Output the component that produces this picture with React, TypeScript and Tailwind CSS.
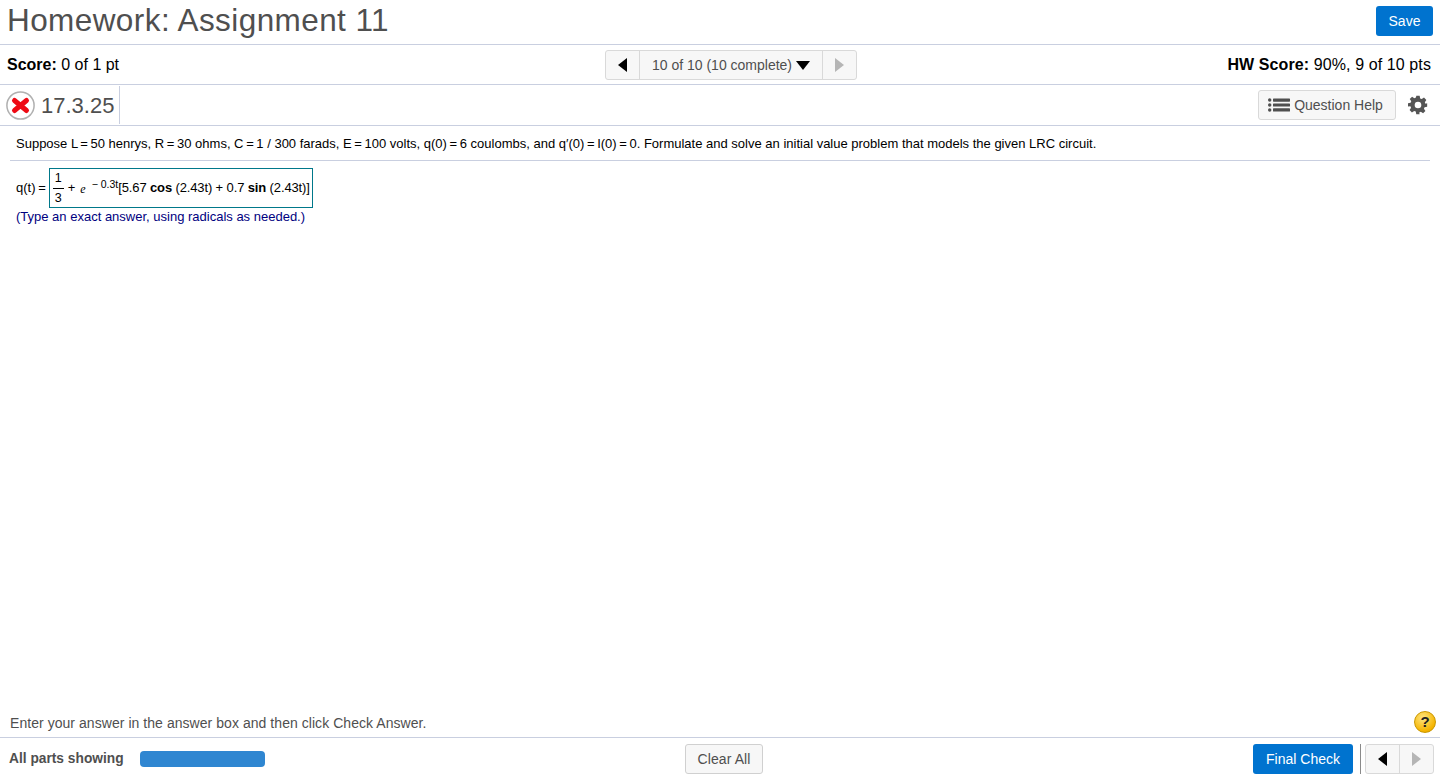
const ff = "font-['Helvetica','Liberation_Sans','Arial',sans-serif]";

function Left({ c = '#000' }: { c?: string }) {
  return <svg width="9" height="14" viewBox="0 0 9 14"><path d="M9 0v14L0 7z" fill={c} /></svg>;
}
function Right({ c = '#b5b5b5' }: { c?: string }) {
  return <svg width="9" height="14" viewBox="0 0 9 14"><path d="M0 0v14l9-7z" fill={c} /></svg>;
}
function Eq() {
  return <span className="mx-[-1px]">=</span>;
}

export default function App() {
  return (
    <div className={`${ff} h-[781px] w-[1440px] overflow-hidden bg-white flex flex-col text-black`}>
      <header className="h-[45px] shrink-0 border-b border-[#c9cfe0] flex items-center justify-between pl-[7px] pr-[7px] pb-[2px]">
        <h1 className="text-[31.5px] leading-[40px] text-[#4f4f4f] tracking-[0.42px] -mt-[3px]">Homework: Assignment 11</h1>
        <button className="h-[30px] w-[57px] rounded-[3px] bg-[#0073cf] text-white text-[14px] font-normal">Save</button>
      </header>

      <div className="h-[40px] shrink-0 border-b border-[#c9cfe0] grid grid-cols-[598px_252px_1fr] items-center px-[7px]">
        <div className="text-[16px] pt-[1px]"><b>Score:</b> 0 of 1 pt</div>
        <div className="h-[30px] flex rounded-[3px] border border-[#d9d9d9] bg-[#f7f7f7]">
          <div className="w-[34px] flex items-center justify-center border-r border-[#d9d9d9]"><Left /></div>
          <div className="flex-1 flex items-center justify-center gap-[4px] text-[14px] text-[#4f4f4f] border-r border-[#d9d9d9] pt-[1px]">
            10 of 10 (10 complete)
            <svg width="14" height="9" viewBox="0 0 14 9"><path d="M0 0h14L7 9z" fill="#000" /></svg>
          </div>
          <div className="w-[33px] flex items-center justify-center"><Right /></div>
        </div>
        <div className="text-[16px] text-right pr-[2px] pt-[1px] tracking-[0.1px]"><b>HW Score:</b> 90%, 9 of 10 pts</div>
      </div>

      <div className="h-[41px] shrink-0 border-b border-[#c9cfe0] flex items-center justify-between pl-[6px] pr-[12px]">
        <div className="flex items-center h-full pt-[1px] pb-[1px]">
          <svg width="29" height="29" viewBox="0 0 29 29" className="shrink-0">
            <circle cx="14.5" cy="14.5" r="13.6" fill="#fff" stroke="#b0b0b0" strokeWidth="1.5" />
            <path d="M8.5 9.5l12 10M20.5 9.5l-12 10" stroke="#ee0a14" strokeWidth="5" strokeLinecap="round" />
          </svg>
          <span className="ml-[6px] text-[22px] text-[#4f4f4f] pr-[5px]">17.3.25</span>
          <div className="h-[38px] w-px bg-[#c9cfe0]" />
        </div>
        <div className="flex items-center gap-[12px]">
          <button className="h-[30px] w-[138px] rounded-[3px] border border-[#d9d9d9] bg-[#f7f7f7] flex items-center justify-center gap-[4px] pr-[3px] text-[14px] text-[#4f4f4f]">
            <svg width="22" height="14" viewBox="0 0 22 14" fill="#4f4f4f">
              <circle cx="1.7" cy="2" r="1.7" /><circle cx="1.7" cy="7" r="1.7" /><circle cx="1.7" cy="12" r="1.7" />
              <rect x="5" y="0.5" width="17" height="3.2" rx="0.6" /><rect x="5" y="5.4" width="17" height="3.2" rx="0.6" /><rect x="5" y="10.3" width="17" height="3.2" rx="0.6" />
            </svg>
            Question Help
          </button>
          <svg width="20" height="20" viewBox="0 0 24 24" fill="#555">
            <path fillRule="evenodd" d="M10 1h4l.6 3.1 1.9.8 2.7-1.8 2.8 2.8-1.8 2.7.8 1.9L23 10v4l-3.1.6-.8 1.9 1.8 2.7-2.8 2.8-2.7-1.8-1.9.8L13.9 23h-4l-.6-3.1-1.9-.8-2.7 1.8-2.8-2.8 1.8-2.7-.8-1.9L0 13.9V10l3.1-.6.8-1.9-1.8-2.7 2.8-2.8 2.7 1.8 1.9-.8zM12 8a4 4 0 1 0 0 8 4 4 0 0 0 0-8z" />
          </svg>
        </div>
      </div>

      <main className="flex-1 min-h-0 pl-[16px] pr-[10px] text-[13px]">
        <p className="h-[35px] border-b border-[#c9cfe0] -ml-[6px] pl-[6px] flex items-center pt-[1px]">
          <span className="whitespace-pre">
            Suppose L <Eq /> 50 henrys, R <Eq /> 30 ohms, C <Eq /> 1 / 300 farads, E <Eq /> 100 volts, q(0) <Eq /> 6 coulombs, and q&#8242;(0) <Eq /> I(0) <Eq /> 0. Formulate and solve an initial value problem that models the given LRC circuit.
          </span>
        </p>
        <div className="flex items-center mt-[7px]">
          <span className="mr-[4px] whitespace-pre">q(t) <Eq /></span>
          <div className="h-[40px] w-[264px] border border-[#00788a] flex items-center pl-[3px]">
            <div className="w-[11px] flex flex-col items-center leading-[15px] text-[12.5px]">
              <span className="pb-[2px]">1</span>
              <span className="w-full border-t border-black pt-[2px] text-center">3</span>
            </div>
            <span className="ml-[4px]">+</span>
            <span className="ml-[5px] font-['Liberation_Serif',serif] italic text-[12px] mt-[2px]">e</span>
            <span className="ml-[6px] text-[10.5px] -mt-[7px] whitespace-pre">− 0.3t</span>
            <span className="whitespace-pre tracking-[-0.13px]">[5.67 <b>cos</b> (2.43t) + 0.7 <b>sin</b> (2.43t)]</span>
          </div>
        </div>
        <p className="mt-[1px] text-[#000080] leading-[16px]">(Type an exact answer, using radicals as needed.)</p>
      </main>

      <div className="h-[30px] shrink-0 border-b border-[#c9cfe0] flex items-center justify-between pl-[10px] pr-[4px] text-[14px] text-[#4f4f4f]">
        <span className="pt-[1px] tracking-[0.05px]">Enter your answer in the answer box and then click Check Answer.</span>
        <div className="relative size-[22px] rounded-full bg-[radial-gradient(circle_at_40%_30%,#ffe680,#f5b400_70%,#d99a00)] border border-[#c99700] flex items-center justify-center text-[15px] font-bold text-[#222] -mt-[1px]">?</div>
      </div>

      <footer className="h-[43px] shrink-0 grid grid-cols-[676px_78px_1fr] items-center pl-[9px] pr-[6px] pb-[1px]">
        <div className="flex items-center">
          <b className="text-[13.75px] text-[#4f4f4f] pt-[1px]">All parts showing</b>
          <div className="ml-[16px] h-[16px] w-[125px] rounded-[4px] bg-[#2f86d1]" />
        </div>
        <button className="h-[30px] w-[78px] rounded-[3px] border border-[#d0d0d0] bg-[#f7f7f7] text-[14px] tracking-[0.1px] text-[#4f4f4f]">Clear All</button>
        <div className="flex items-center justify-end">
          <button className="h-[30px] w-[100px] rounded-[3px] bg-[#0073cf] text-white text-[14px] pt-[1px]">Final Check</button>
          <div className="h-[30px] w-px bg-[#8a8a8a] ml-[7px] mr-[4px]" />
          <div className="h-[30px] w-[69px] flex rounded-[3px] border border-[#d9d9d9] bg-[#f7f7f7]">
            <div className="w-[34px] flex items-center justify-center border-r border-[#d9d9d9]"><Left /></div>
            <div className="flex-1 flex items-center justify-center"><Right /></div>
          </div>
        </div>
      </footer>
    </div>
  );
}
